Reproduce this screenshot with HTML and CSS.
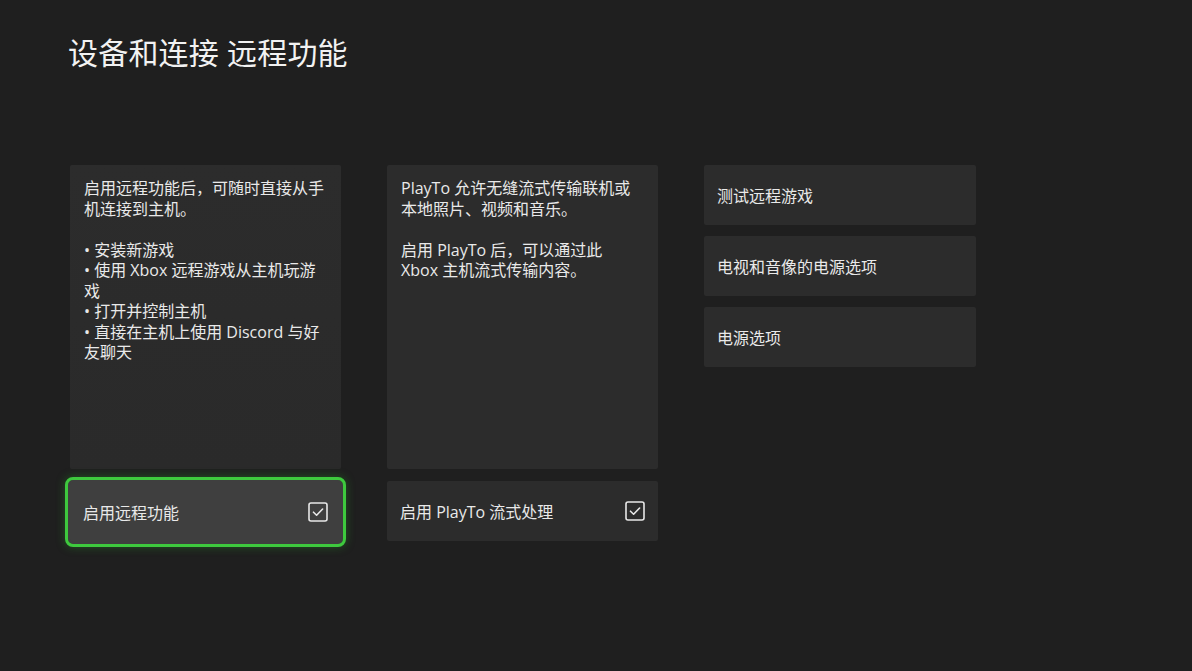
FILE: index.html
```html
<!DOCTYPE html>
<html lang="zh-CN">
<head>
<meta charset="utf-8">
<title>设备和连接 远程功能</title>
<link rel="stylesheet" href="styles.css">
</head>
<body>
<header class="header">
  <h1 class="title">设备和连接 远程功能</h1>
</header>
<main class="columns">
  <section class="column">
    <div class="card info">
      <p>启用远程功能后，可随时直接从手<br>机连接到主机。</p>
      <p class="blank">&nbsp;</p>
      <p><span class="bullet">•</span> 安装新游戏</p>
      <p><span class="bullet">•</span> 使用 Xbox 远程游戏从主机玩游<br>戏</p>
      <p><span class="bullet">•</span> 打开并控制主机</p>
      <p><span class="bullet">•</span> 直接在主机上使用 Discord 与好<br>友聊天</p>
    </div>
    <div class="card toggle focused">
      <span class="label">启用远程功能</span>
      <span class="check">
        <svg viewBox="0 0 20 20" width="20" height="20"><rect x="1" y="1" width="18" height="18" rx="2" fill="none" stroke="#e8e8e8" stroke-width="1.6"/><path d="M5.5 10.2 L8.6 13.2 L14.6 7" fill="none" stroke="#e8e8e8" stroke-width="1.6" stroke-linecap="round" stroke-linejoin="round"/></svg>
      </span>
    </div>
  </section>
  <section class="column">
    <div class="card info">
      <p>PlayTo 允许无缝流式传输联机或<br>本地照片、视频和音乐。</p>
      <p class="blank">&nbsp;</p>
      <p>启用 PlayTo 后，可以通过此<br>Xbox 主机流式传输内容。</p>
    </div>
    <div class="card toggle">
      <span class="label">启用 PlayTo 流式处理</span>
      <span class="check">
        <svg viewBox="0 0 20 20" width="20" height="20"><rect x="1" y="1" width="18" height="18" rx="2" fill="none" stroke="#e8e8e8" stroke-width="1.6"/><path d="M5.5 10.2 L8.6 13.2 L14.6 7" fill="none" stroke="#e8e8e8" stroke-width="1.6" stroke-linecap="round" stroke-linejoin="round"/></svg>
      </span>
    </div>
  </section>
  <section class="column links">
    <div class="card link">测试远程游戏</div>
    <div class="card link">电视和音像的电源选项</div>
    <div class="card link">电源选项</div>
  </section>
</main>
</body>
</html>
```
FILE: styles.css
```css
html, body {
  margin: 0;
  padding: 0;
}
body {
  width: 1192px;
  height: 671px;
  overflow: hidden;
  background: #1f1f1f;
  color: #e9e9e9;
  font-family: "Open Sans", "Noto Sans CJK SC", sans-serif;
}
.header {
  padding: 33px 0 0 68px;
  height: 132px;
  box-sizing: border-box;
}
.title {
  margin: 0;
  font-size: 30px;
  font-weight: 400;
  line-height: 40px;
  color: #f2f2f2;
  letter-spacing: 0.2px;
}
.columns {
  display: grid;
  grid-template-columns: 271px 271px 272px;
  column-gap: 46px;
  padding-left: 70px;
  padding-top: 33px;
}
.column {
  display: flex;
  flex-direction: column;
  gap: 12px;
}
.card {
  background: #2c2c2c;
  border-radius: 2px;
  box-sizing: border-box;
}
.info {
  height: 304px;
  padding: 13px 10px 0 14px;
  font-size: 16px;
  line-height: 20.5px;
}
.column:first-child .info {
  background: linear-gradient(#2c2c2c, #2a2a2a);
}
.info p {
  margin: 0;
  white-space: nowrap;
}
.bullet {
  font-family: "Open Sans", sans-serif;
}
.toggle {
  height: 60px;
  display: flex;
  align-items: center;
  justify-content: space-between;
  padding: 0 13px 0 13px;
  font-size: 16px;
}
.check {
  display: flex;
  width: 20px;
  height: 20px;
}
.focused {
  position: relative;
  background: #3f3f3f;
  margin-top: 1px;
  outline: 3px solid #3ec93e;
  outline-offset: 2px;
  border-radius: 3px;
  box-shadow: 0 0 0 2px #3f3f3f, 0 0 10px 5px rgba(40, 180, 40, 0.35);
}
.links {
  gap: 11px;
}
.link {
  height: 60px;
  display: flex;
  align-items: center;
  padding-left: 13px;
  font-size: 16px;
}
```
